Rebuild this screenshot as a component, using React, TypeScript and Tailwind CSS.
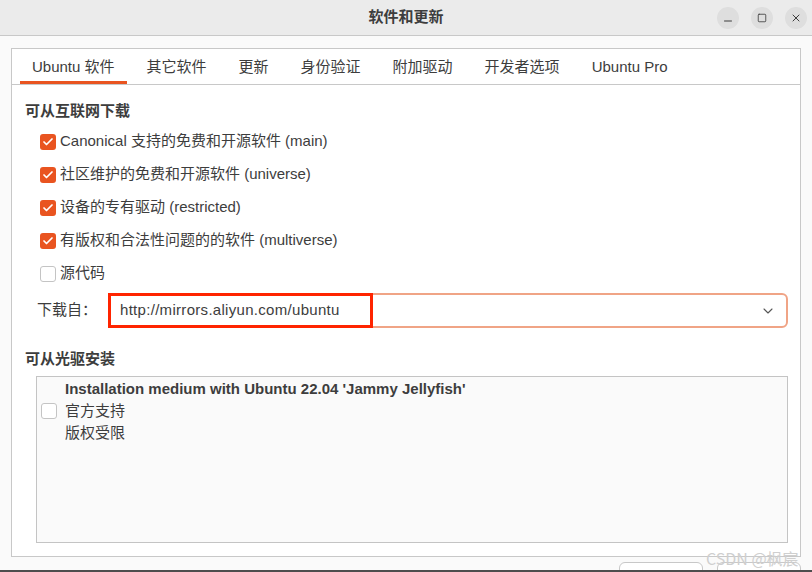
import { Check, ChevronDown, Minus, Square, X } from "lucide-react";

const tabs = ["Ubuntu 软件", "其它软件", "更新", "身份验证", "附加驱动", "开发者选项", "Ubuntu Pro"];

const sources = [
  { label: "Canonical 支持的免费和开源软件 (main)", checked: true },
  { label: "社区维护的免费和开源软件 (universe)", checked: true },
  { label: "设备的专有驱动 (restricted)", checked: true },
  { label: "有版权和合法性问题的的软件 (multiverse)", checked: true },
  { label: "源代码", checked: false },
];

function CheckBox({ checked }: { checked: boolean }) {
  if (checked) {
    return (
      <span className="flex h-4 w-4 shrink-0 items-center justify-center rounded-[3px] bg-[#e95420]">
        <Check size={12} strokeWidth={3.5} className="text-white" />
      </span>
    );
  }
  return <span className="h-4 w-4 shrink-0 rounded-[3px] border border-[#c4c4c4] bg-white" />;
}

function WinButton({ children }: { children: React.ReactNode }) {
  return (
    <span className="flex h-[22px] w-[22px] items-center justify-center rounded-full bg-[#dedede] text-[#3d3d3d]">
      {children}
    </span>
  );
}

export default function App() {
  return (
    <div
      className="relative flex h-[572px] w-[812px] flex-col overflow-hidden border-b-2 border-[#4d4d4d] bg-[#fafafa] text-[15px] text-[#3d3d3d]"
      style={{ fontFamily: '"Liberation Sans", "Noto Sans CJK SC", sans-serif' }}
    >
      {/* title bar */}
      <div className="grid h-[36px] shrink-0 grid-cols-[1fr_auto_1fr] items-center border-b border-[#c8c8c8] bg-[#ebebeb]">
        <div />
        <div className="font-bold">软件和更新</div>
        <div className="flex justify-end gap-3 pr-[5px]">
          <WinButton>
            <Minus size={12} strokeWidth={2} className="translate-y-[3px]" />
          </WinButton>
          <WinButton>
            <Square size={10} strokeWidth={2} />
          </WinButton>
          <WinButton>
            <X size={12} strokeWidth={2} />
          </WinButton>
        </div>
      </div>

      {/* notebook */}
      <div className="mx-[11px] mt-[12px] flex h-[509px] shrink-0 flex-col border border-[#c8c8c8] bg-white">
        <div className="flex h-[36px] shrink-0 items-stretch gap-[8px] border-b border-[#c8c8c8] pl-[8px]">
          {tabs.map((t, i) => (
            <div
              key={t}
              className={`flex items-center whitespace-nowrap border-b-[3px] px-3 pt-[4px] ${
                i === 0 ? "border-[#e95420]" : "border-transparent"
              }`}
            >
              {t}
            </div>
          ))}
        </div>

        <div className="flex flex-1 flex-col pl-[13px] pr-[12px] pt-[15px]">
          <div className="h-[22px] font-bold leading-[22px]">可从互联网下载</div>
          <div className="mt-[3px] flex flex-col pl-[15px]">
            {sources.map((s) => (
              <div key={s.label} className="flex h-[33px] items-center gap-[4px]">
                <CheckBox checked={s.checked} />
                <span>{s.label}</span>
              </div>
            ))}
          </div>

          <div className="mt-[3px] flex h-[35px] items-center">
            <span className="w-[83px] shrink-0 whitespace-nowrap pl-[12px]">下载自：</span>
            <div className="relative flex h-[35px] flex-1 items-center rounded-[6px] border-2 border-[#f0a486] bg-white pl-[10px] pr-[10px]">
              <span className="flex-1 tracking-[0.3px]">http://mirrors.aliyun.com/ubuntu</span>
              <ChevronDown size={16} strokeWidth={1.6} className="text-[#555]" />
              <span className="absolute -left-[2px] -top-[2px] h-[35px] w-[265px] border-[3px] border-[#ff2400]" />
            </div>
          </div>

          <div className="mt-[20px] h-[22px] font-bold leading-[22px]">可从光驱安装</div>
          <div className="ml-[11px] mt-[6px] h-[167px] border border-[#c4c4c4] bg-[#fafafa] pl-[4px] pt-[1px]">
            <div className="flex items-center gap-[8px]">
              <CheckBox checked={false} />
              <div className="flex flex-col leading-[22px]">
                <span className="font-bold">Installation medium with Ubuntu 22.04 'Jammy Jellyfish'</span>
                <span>官方支持</span>
                <span>版权受限</span>
              </div>
            </div>
          </div>
        </div>
      </div>

      {/* dialog buttons, cut off by the bottom edge */}
      <div className="mt-[5px] flex justify-end gap-[14px] pr-[11px]">
        <div className="h-[30px] w-[84px] rounded-[6px] border border-[#c8c8c8] bg-white" />
        <div className="h-[30px] w-[84px] rounded-[6px] border border-[#c8c8c8] bg-white" />
      </div>

      <span
        className="absolute left-[706px] top-[546px] text-[16px] text-[#cfcfcf]"
        style={{ fontFamily: '"Noto Sans CJK SC", sans-serif' }}
      >
        CSDN @枫宸
      </span>
    </div>
  );
}
